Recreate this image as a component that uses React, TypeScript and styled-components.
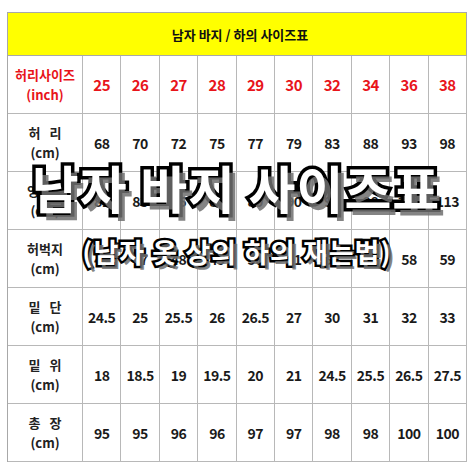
import styled, { createGlobalStyle } from "styled-components";

const GlobalStyle = createGlobalStyle`
  html, body {
    margin: 0;
    padding: 0;
    background: #ffffff;
    font-family: "Noto Sans CJK KR", "Noto Sans", sans-serif;
  }
`;

const sizes = ["25", "26", "27", "28", "29", "30", "32", "34", "36", "38"];

const rows = [
  { label: "허   리", values: ["68", "70", "72", "75", "77", "79", "83", "88", "93", "98"] },
  { label: "엉덩이", values: ["81", "83", "85", "87", "89", "90", "93", "98", "108", "113"] },
  { label: "허벅지", values: ["46", "47", "48", "49", "50", "51", "53", "55", "58", "59"] },
  { label: "밑   단", values: ["24.5", "25", "25.5", "26", "26.5", "27", "30", "31", "32", "33"] },
  { label: "밑   위", values: ["18", "18.5", "19", "19.5", "20", "21", "24.5", "25.5", "26.5", "27.5"] },
  { label: "총   장", values: ["95", "95", "96", "96", "97", "97", "98", "98", "100", "100"] },
];

const App = () => {
  return (
    <>
      <GlobalStyle />
      <Page>
        <Sheet>
          <Table>
            <Title>남자 바지 / 하의 사이즈표</Title>
            <Cell>
              <Label $red>
                허리사이즈
                <br />
                (inch)
              </Label>
            </Cell>
            {sizes.map((s) => (
              <Cell key={s}>
                <Num $red>{s}</Num>
              </Cell>
            ))}
            {rows.map((r) => (
              <Row key={r.label} label={r.label} values={r.values} />
            ))}
          </Table>
          <Overlay>
            <BigTitle>남자 바지 사이즈표</BigTitle>
            <SubTitle>(남자 옷 상의 하의 재는법)</SubTitle>
          </Overlay>
        </Sheet>
      </Page>
    </>
  );
};

const Row = ({ label, values }: { label: string; values: string[] }) => (
  <>
    <Cell>
      <Label>
        {label}
        <br />
        (cm)
      </Label>
    </Cell>
    {values.map((v, i) => (
      <Cell key={i}>
        <Num>{v}</Num>
      </Cell>
    ))}
  </>
);

export default App;

const Page = styled.div`
  width: 474px;
  height: 474px;
  padding: 12px 7px 0 7px;
  box-sizing: border-box;
`;

const Sheet = styled.div`
  position: relative;
  width: 460px;
`;

const Table = styled.div`
  display: grid;
  grid-template-columns: 75px repeat(10, 1fr);
  grid-template-rows: 43px repeat(7, 58px);
  border-top: 1px solid #a8a8a8;
  border-left: 1px solid #a8a8a8;
`;

const Title = styled.div`
  grid-column: 1 / -1;
  background: #ffff00;
  display: flex;
  align-items: center;
  justify-content: center;
  font-size: 13px;
  font-weight: 700;
  color: #111;
  border-right: 1px solid #a8a8a8;
  border-bottom: 1px solid #a8a8a8;
  padding-left: 6px;
`;

const Cell = styled.div`
  display: flex;
  align-items: center;
  justify-content: center;
  border-right: 1px solid #b8b8b8;
  border-bottom: 1px solid #b8b8b8;
  background: #fff;
  text-align: center;
  white-space: pre;
`;

const Label = styled.div<{ $red?: boolean }>`
  font-size: 13px;
  font-weight: 700;
  line-height: 20px;
  color: ${(p) => (p.$red ? "#e8141a" : "#222")};
`;

const Num = styled.span<{ $red?: boolean }>`
  font-size: ${(p) => (p.$red ? "15px" : "14px")};
  font-weight: 700;
  letter-spacing: -0.5px;
  color: ${(p) => (p.$red ? "#e8141a" : "#1a1a1a")};
`;

const Overlay = styled.div`
  position: absolute;
  left: 0;
  right: 0;
  top: 138px;
  display: flex;
  flex-direction: column;
  align-items: center;
  pointer-events: none;
`;

const BigTitle = styled.div`
  font-size: 51px;
  font-weight: 700;
  line-height: 74px;
  letter-spacing: 1px;
  color: #ffffff;
  -webkit-text-stroke: 7px #000;
  paint-order: stroke fill;
  text-shadow: 6px 7px 0 rgba(110, 110, 110, 0.85);
  white-space: pre;
  margin-left: -2px;
`;

const SubTitle = styled.div`
  font-size: 27px;
  font-weight: 700;
  line-height: 36px;
  margin-top: 10px;
  letter-spacing: 1px;
  color: #ffffff;
  -webkit-text-stroke: 5px #000;
  paint-order: stroke fill;
  text-shadow: 4px 4px 0 rgba(110, 110, 110, 0.85);
  white-space: pre;
`;
